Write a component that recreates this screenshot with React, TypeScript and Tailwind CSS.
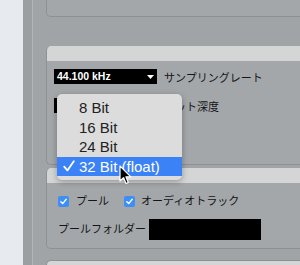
import React from "react";

const jp = { fontFamily: '"Liberation Sans", "Noto Sans CJK JP", sans-serif' };

function Check() {
  return (
    <span className="w-[11px] h-[11px] rounded-[2px] bg-[#3d8ef5] flex items-center justify-center">
      <svg width="9" height="9" viewBox="0 0 9 9">
        <path d="M1.8 4.8 L3.7 6.6 L7.2 2.2" stroke="white" strokeWidth="1.4" fill="none" strokeLinecap="round" strokeLinejoin="round" />
      </svg>
    </span>
  );
}

export default function App() {
  const items = ["8 Bit", "16 Bit", "24 Bit"];
  return (
    <div className="relative w-[300px] h-[265px] overflow-hidden flex bg-[#a0a4a7]" style={jp}>
      <div className="w-[23px] bg-[#e7ebf0]" />
      <div className="w-[10px] bg-[#9b9fa2] border-r border-[#b3b6b9]" />
      <div className="flex-1 pl-[13px] flex flex-col">
        {/* panel 1 */}
        <div className="h-[17px] shrink-0 border-l border-b border-[#8d9194] rounded-bl-[5px] bg-[#a3a7aa]" />
        {/* panel 2 */}
        <div className="mt-[29px] h-[119px] shrink-0 border-l border-b border-[#8d9194] rounded-tl-[5px] rounded-bl-[5px] bg-[#a3a7aa] flex flex-col overflow-hidden">
          <div className="h-[15px] bg-[#d4d6d6]" />
          <div className="pl-[7px] pt-[8px] flex flex-col gap-[14px]">
            <div className="flex items-center">
              <div className="w-[103px] h-[15px] bg-black flex items-center justify-between pl-[3px] pr-[3px]">
                <span className="text-white font-bold text-[10.5px] leading-none" style={{ fontFamily: '"Liberation Sans", sans-serif' }}>44.100 kHz</span>
                <svg width="7" height="4" viewBox="0 0 7 4"><path d="M0 0 L7 0 L3.5 4 Z" fill="white" /></svg>
              </div>
              <span className="ml-[7px] pt-[4px] text-[11px] text-[#151515] leading-none">サンプリングレート</span>
            </div>
            <div className="flex items-center">
              <div className="w-[103px] h-[15px] bg-black" />
              <span className="ml-[7px] pt-[4px] text-[11px] text-[#151515] leading-none">ビット深度</span>
            </div>
          </div>
        </div>
        {/* panel 3 */}
        <div className="mt-[3px] h-[81px] shrink-0 border-l border-b border-[#8d9194] rounded-tl-[5px] rounded-bl-[5px] bg-[#a3a7aa] flex flex-col overflow-hidden">
          <div className="h-[15px] bg-[#d4d6d6]" />
          <div className="pl-[11px] pt-[13px] flex flex-col">
            <div className="flex items-center h-[11px]">
              <Check />
              <span className="ml-[7px] text-[11px] text-[#151515] leading-none">プール</span>
              <span className="ml-[15px]"><Check /></span>
              <span className="ml-[6px] text-[11px] text-[#151515] leading-none">オーディオトラック</span>
            </div>
            <div className="flex items-center mt-[12px]">
              <span className="text-[11px] text-[#151515] leading-none">プールフォルダー</span>
              <div className="ml-[3px] w-[112px] h-[21px] bg-black" />
            </div>
          </div>
        </div>
        {/* panel 4 */}
        <div className="mt-[11px] h-[20px] shrink-0 border-l border-t border-[#8d9194] rounded-tl-[5px] bg-[#d4d6d6]" />
      </div>

      {/* popup menu */}
      <div className="absolute left-[57px] top-[94px] w-[125px] rounded-[5px] bg-[#dcdcdc] py-[4px] shadow-[0_2px_6px_rgba(0,0,0,0.3)]" style={{ fontFamily: '"Liberation Sans", sans-serif' }}>
        {items.map((t) => (
          <div key={t} className="h-[19.5px] flex items-center pl-[22px] text-[15px] text-[#222] leading-none">{t}</div>
        ))}
        <div className="h-[19.5px] flex items-center bg-[#3a82f6] text-white text-[15px] leading-none">
          <span className="w-[22px] pl-[6px] flex items-center">
            <svg width="12" height="12" viewBox="0 0 12 12">
              <path d="M1.2 6.6 L4.4 10.4 L10.8 1.2" stroke="white" strokeWidth="1.8" fill="none" strokeLinecap="round" strokeLinejoin="round" />
            </svg>
          </span>
          <span>32 Bit (float)</span>
        </div>
      </div>

      {/* cursor */}
      <svg className="absolute left-[119px] top-[165px]" width="14" height="21" viewBox="0 0 14 21">
        <path d="M1 1 L1 16 L4.5 12.6 L7 18.5 L9.3 17.5 L6.9 11.8 L11.8 11.8 Z" fill="black" stroke="white" strokeWidth="1.2" strokeLinejoin="round" />
      </svg>
    </div>
  );
}
